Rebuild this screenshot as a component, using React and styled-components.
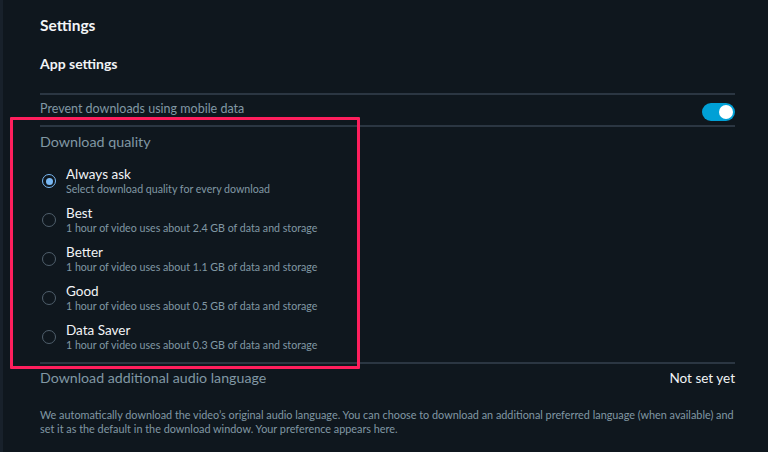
import React from "react";
import styled, { createGlobalStyle } from "styled-components";

const Global = createGlobalStyle`
  html, body { margin: 0; padding: 0; background: #0f171e; }
  body { font-family: "Lato", "Liberation Sans", sans-serif; -webkit-font-smoothing: antialiased; }
`;

const Page = styled.div`
  position: relative;
  width: 768px;
  height: 452px;
  overflow: hidden;
  background: #0f171e;
  border-left: 3px solid #18212b;
  box-sizing: border-box;
  padding: 15px 0 0 37px;
`;

const Content = styled.div`
  width: 695px;
  display: flex;
  flex-direction: column;
`;

const Title = styled.h1`
  margin: 0;
  font-size: 15.5px;
  line-height: 20px;
  font-weight: 700;
  color: #f2f4f6;
`;

const Subtitle = styled.h2`
  margin: 19px 0 0;
  font-size: 14px;
  line-height: 20px;
  font-weight: 700;
  color: #f2f4f6;
`;

const Divider = styled.div`
  height: 2px;
  background: #2b3642;
  margin-top: ${(p) => p.$mt || 0}px;
`;

const Row = styled.div`
  display: flex;
  align-items: center;
  justify-content: space-between;
  height: ${(p) => p.$h}px;
  margin-top: ${(p) => p.$mt || 0}px;
`;

const Label = styled.span`
  font-size: ${(p) => p.$size || 12.5}px;
  color: #8197a4;
  line-height: 20px;
  margin-top: ${(p) => (p.$up ? -3 : 0)}px;
`;

const Value = styled.span`
  font-size: 13.5px;
  color: #f2f4f6;
  line-height: 20px;
`;

const Toggle = styled.div`
  width: 33px;
  height: 18px;
  border-radius: 9px;
  background: #00a0d6;
  display: flex;
  align-items: center;
  justify-content: flex-end;
  padding: 0 2px;
  box-sizing: border-box;
  margin-top: 3px;
`;

const Knob = styled.div`
  width: 14px;
  height: 14px;
  border-radius: 50%;
  background: #ffffff;
`;

const Options = styled.div`
  display: flex;
  flex-direction: column;
  gap: 9px;
  margin-top: 14px;
`;

const Option = styled.div`
  display: flex;
  align-items: center;
`;

const RadioWrap = styled.div`
  width: 26px;
  display: flex;
  align-items: center;
  padding-left: 2px;
  box-sizing: border-box;
`;

const Radio = styled.div`
  width: 14px;
  height: 14px;
  border-radius: 50%;
  box-sizing: border-box;
  border: 1.5px solid ${(p) => (p.$on ? "#79b8f3" : "#4f5f6c")};
  display: flex;
  align-items: center;
  justify-content: center;
  &::after {
    content: "";
    display: ${(p) => (p.$on ? "block" : "none")};
    width: 7px;
    height: 7px;
    border-radius: 50%;
    background: #79b8f3;
  }
`;

const OptText = styled.div`
  display: flex;
  flex-direction: column;
`;

const OptTitle = styled.span`
  font-size: 13.5px;
  line-height: 16px;
  color: #f2f4f6;
`;

const OptDesc = styled.span`
  font-size: 10.65px;
  line-height: 14px;
  color: #8197a4;
`;

const Paragraph = styled.p`
  margin: 20px 0 0;
  font-size: 10.85px;
  line-height: 14px;
  color: #8197a4;
`;

const Highlight = styled.div`
  position: absolute;
  left: 7px;
  top: 117px;
  width: 350px;
  height: 252px;
  border: 3px solid #ff1f5d;
  border-radius: 1px;
  box-sizing: border-box;
  pointer-events: none;
`;

const options = [
  { t: "Always ask", d: "Select download quality for every download", on: true },
  { t: "Best", d: "1 hour of video uses about 2.4 GB of data and storage" },
  { t: "Better", d: "1 hour of video uses about 1.1 GB of data and storage" },
  { t: "Good", d: "1 hour of video uses about 0.5 GB of data and storage" },
  { t: "Data Saver", d: "1 hour of video uses about 0.3 GB of data and storage" },
];

export default function App() {
  return (
    <>
      <Global />
      <Page>
        <Content>
          <Title>Settings</Title>
          <Subtitle>App settings</Subtitle>
          <Divider $mt={19} />
          <Row $h={30}>
            <Label $up>Prevent downloads using mobile data</Label>
            <Toggle>
              <Knob />
            </Toggle>
          </Row>
          <Divider />
          <Row $h={20} $mt={5}>
            <Label $size={14.3}>Download quality</Label>
          </Row>
          <Options>
            {options.map((o) => (
              <Option key={o.t}>
                <RadioWrap>
                  <Radio $on={o.on} />
                </RadioWrap>
                <OptText>
                  <OptTitle>{o.t}</OptTitle>
                  <OptDesc>{o.d}</OptDesc>
                </OptText>
              </Option>
            ))}
          </Options>
          <Divider $mt={10} />
          <Row $h={20} $mt={4}>
            <Label $size={14.2}>Download additional audio language</Label>
            <Value>Not set yet</Value>
          </Row>
          <Paragraph>
            We automatically download the video’s original audio language. You can choose to download an additional preferred language (when available) and set it as the default in the download window. Your preference appears here.
          </Paragraph>
        </Content>
        <Highlight />
      </Page>
    </>
  );
}
